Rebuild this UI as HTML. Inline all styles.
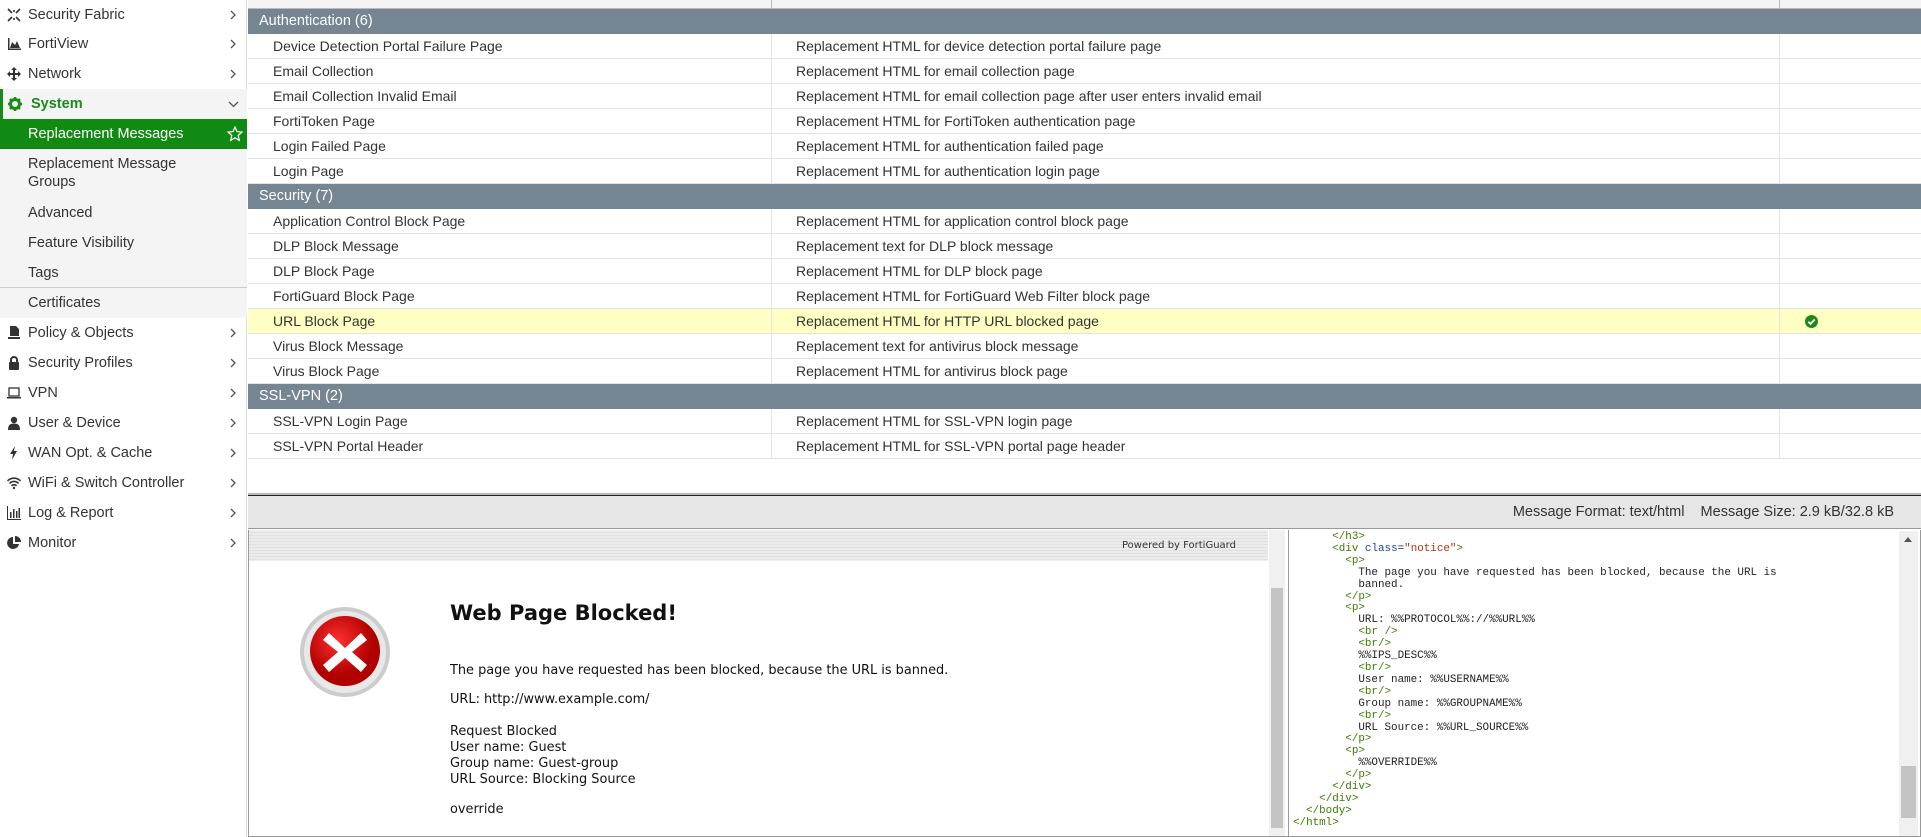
<!DOCTYPE html>
<html><head><meta charset="utf-8">
<style>
*{margin:0;padding:0;box-sizing:border-box}
body{width:1921px;height:837px;overflow:hidden;background:#fff;font-family:"Liberation Sans",sans-serif;color:#333;position:relative}
.sb{position:absolute;left:0;top:0;width:247px;height:837px;background:#fff;border-right:1px solid #ddd}
.it{position:absolute;left:0;width:247px;height:30px;line-height:30px;font-size:14.5px;color:#333;padding-left:28px}
.it .ic{position:absolute;left:7px;top:8px;width:14px;height:14px}
.it .ch{position:absolute;left:230px;top:10px;width:6px;height:10px}
.sub{background:#f4f4f4}
.tbl{position:absolute;left:248px;top:0;width:1673px}
.row{position:absolute;left:0;width:1673px;height:25px;border-bottom:1px solid #e3e3e3;font-size:14px;line-height:24px}
.row .n{position:absolute;left:25px}
.row .d{position:absolute;left:548px}
.row:before{content:"";position:absolute;left:523px;top:0;height:25px;border-left:1px solid #e3e3e3}
.row:after{content:"";position:absolute;left:1531px;top:0;height:25px;border-left:1px solid #e3e3e3}
.grp{position:absolute;left:0;width:1673px;height:25px;background:#768592;color:#fff;font-size:14.5px;line-height:25px;padding-left:11px}
.code{position:absolute;left:1293px;top:532px;font-family:"Liberation Mono",monospace;font-size:10.9px;line-height:11.9px;color:#222;white-space:pre}
.t{color:#3d7a00}.a{color:#1a3fb0}.v{color:#b03010}
.pv{position:absolute;font-family:"DejaVu Sans",sans-serif;font-size:12.9px;color:#111;left:450px}
</style></head><body>
<svg width="0" height="0" style="position:absolute"><defs><path id="chv" d="M1 1l4 4-4 4" fill="none" stroke="#555" stroke-width="1.3"/></defs></svg>
<div class="sb">
 <div class="it" style="top:0"><svg class="ic" viewBox="0 0 14 14"><g stroke="#333" stroke-width="1.6"><path d="M1 1l4 4M13 1l-4 4M1 13l4-4M13 13l-4-4M7 2v2M7 10v2"/></g></svg>Security Fabric<svg class="ch"><use href="#chv"/></svg></div>
 <div class="it" style="top:29px"><svg class="ic" viewBox="0 0 14 14"><path d="M1 1v12h13v-1.5H2.5V1z M3 11l2-6 3 3 2-4 3 7z" fill="#333"/></svg>FortiView<svg class="ch"><use href="#chv"/></svg></div>
 <div class="it" style="top:59px"><svg class="ic" viewBox="0 0 14 14"><path d="M7 0l3 3H8v3h3V4l3 3-3 3V8H8v3h2l-3 3-3-3h2V8H3v2L0 7l3-3v2h3V3H4z" fill="#333"/></svg>Network<svg class="ch"><use href="#chv"/></svg></div>
 <div class="it sub" style="top:89px;color:#1a8a1a;font-weight:bold;border-left:3px solid #1a8a1a"><svg class="ic" style="left:5px" viewBox="0 0 14 14"><circle cx="7" cy="7" r="4.5" fill="none" stroke="#1a8a1a" stroke-width="3"/><g stroke="#1a8a1a" stroke-width="2.4"><path d="M7 0v3M7 11v3M0 7h3M11 7h3M2 2l2 2M10 10l2 2M12 2l-2 2M2 12l2-2"/></g></svg>System<svg style="position:absolute;left:225px;top:12px" width="11" height="7"><path d="M1 1l4.5 4.5L10 1" fill="none" stroke="#555" stroke-width="1.3"/></svg></div>
 <div class="it" style="top:119px;background:#118a14;color:#fff">Replacement Messages<svg style="position:absolute;left:227px;top:7px" width="16" height="16" viewBox="0 0 16 16"><path d="M8 1l2 4.6 5 .5-3.8 3.3 1.1 5L8 11.8 3.7 14.4l1.1-5L1 6.1l5-.5z" fill="none" stroke="#fff" stroke-width="1.2"/></svg></div>
 <div class="sub" style="position:absolute;top:149px;left:0;width:247px;height:138px"></div>
 <div class="it" style="top:155px;line-height:18px;height:40px">Replacement Message<br>Groups</div>
 <div class="it" style="top:198px">Advanced</div>
 <div class="it" style="top:228px">Feature Visibility</div>
 <div class="it" style="top:258px">Tags</div>
 <div class="it sub" style="top:287px;height:31px;border-top:1px solid #ccc">Certificates</div>
 <div class="it" style="top:318px"><svg class="ic" viewBox="0 0 14 14"><path d="M3 0h6l3 3v7H3z M1 11h12v2H1z" fill="#333"/></svg>Policy &amp; Objects<svg class="ch"><use href="#chv"/></svg></div>
 <div class="it" style="top:348px"><svg class="ic" viewBox="0 0 14 14"><path d="M4 6V4a3 3 0 016 0v2" fill="none" stroke="#333" stroke-width="2"/><rect x="2" y="6" width="10" height="8" rx="1" fill="#333"/></svg>Security Profiles<svg class="ch"><use href="#chv"/></svg></div>
 <div class="it" style="top:378px"><svg class="ic" viewBox="0 0 14 14"><rect x="2" y="2" width="10" height="8" fill="none" stroke="#333" stroke-width="1.3"/><path d="M0 11h14v1.5H0z" fill="#333"/></svg>VPN<svg class="ch"><use href="#chv"/></svg></div>
 <div class="it" style="top:408px"><svg class="ic" viewBox="0 0 14 14"><circle cx="7" cy="4" r="3.2" fill="#333"/><path d="M1 14c0-5 2-6.5 6-6.5s6 1.5 6 6.5z" fill="#333"/></svg>User &amp; Device<svg class="ch"><use href="#chv"/></svg></div>
 <div class="it" style="top:438px"><svg class="ic" viewBox="0 0 14 14"><path d="M8 0L3 8h3l-1 6 5-9H7z" fill="#333"/></svg>WAN Opt. &amp; Cache<svg class="ch"><use href="#chv"/></svg></div>
 <div class="it" style="top:468px"><svg class="ic" viewBox="0 0 14 14"><g fill="none" stroke="#333" stroke-width="1.6"><path d="M0.5 5a9 9 0 0113 0M2.5 7.5a6 6 0 019 0M4.5 10a3 3 0 015 0"/></g><circle cx="7" cy="12" r="1.2" fill="#333"/></svg>WiFi &amp; Switch Controller<svg class="ch"><use href="#chv"/></svg></div>
 <div class="it" style="top:498px"><svg class="ic" viewBox="0 0 14 14"><path d="M1 0v13h13v1H0V0z M3 6h1.5v6H3zM6 3h1.5v9H6zM9 5h1.5v7H9zM11.5 2H13v10h-1.5z" fill="#333"/></svg>Log &amp; Report<svg class="ch"><use href="#chv"/></svg></div>
 <div class="it" style="top:528px"><svg class="ic" viewBox="0 0 14 14"><path d="M6 1a6 6 0 106 7H6z" fill="#333"/><path d="M8 0v6h6a6 6 0 00-6-6z" fill="#333"/></svg>Monitor<svg class="ch"><use href="#chv"/></svg></div>
</div>

<div class="tbl">
 <div style="position:absolute;top:0;left:0;width:1673px;height:9px;background:#f4f4f4;border-bottom:1px solid #bbb"><div style="position:absolute;left:523px;top:0;height:9px;border-left:1px solid #bbb"></div><div style="position:absolute;left:1531px;top:0;height:9px;border-left:1px solid #bbb"></div></div>
 <div class="grp" style="top:9px">Authentication (6)</div>
 <div class="row" style="top:34px"><span class="n">Device Detection Portal Failure Page</span><span class="d">Replacement HTML for device detection portal failure page</span></div>
 <div class="row" style="top:59px"><span class="n">Email Collection</span><span class="d">Replacement HTML for email collection page</span></div>
 <div class="row" style="top:84px"><span class="n">Email Collection Invalid Email</span><span class="d">Replacement HTML for email collection page after user enters invalid email</span></div>
 <div class="row" style="top:109px"><span class="n">FortiToken Page</span><span class="d">Replacement HTML for FortiToken authentication page</span></div>
 <div class="row" style="top:134px"><span class="n">Login Failed Page</span><span class="d">Replacement HTML for authentication failed page</span></div>
 <div class="row" style="top:159px"><span class="n">Login Page</span><span class="d">Replacement HTML for authentication login page</span></div>
 <div class="grp" style="top:184px">Security (7)</div>
 <div class="row" style="top:209px"><span class="n">Application Control Block Page</span><span class="d">Replacement HTML for application control block page</span></div>
 <div class="row" style="top:234px"><span class="n">DLP Block Message</span><span class="d">Replacement text for DLP block message</span></div>
 <div class="row" style="top:259px"><span class="n">DLP Block Page</span><span class="d">Replacement HTML for DLP block page</span></div>
 <div class="row" style="top:284px"><span class="n">FortiGuard Block Page</span><span class="d">Replacement HTML for FortiGuard Web Filter block page</span></div>
 <div class="row" style="top:309px;background:#ffffc4"><span class="n">URL Block Page</span><span class="d">Replacement HTML for HTTP URL blocked page</span><svg style="position:absolute;left:1557px;top:6px" width="13" height="13" viewBox="0 0 13 13"><circle cx="6.5" cy="6.5" r="6.5" fill="#1a8a1a"/><path d="M3.3 6.7l2.2 2.2 4.2-4.4" fill="none" stroke="#fff" stroke-width="1.8"/></svg></div>
 <div class="row" style="top:334px"><span class="n">Virus Block Message</span><span class="d">Replacement text for antivirus block message</span></div>
 <div class="row" style="top:359px"><span class="n">Virus Block Page</span><span class="d">Replacement HTML for antivirus block page</span></div>
 <div class="grp" style="top:384px">SSL-VPN (2)</div>
 <div class="row" style="top:409px"><span class="n">SSL-VPN Login Page</span><span class="d">Replacement HTML for SSL-VPN login page</span></div>
 <div class="row" style="top:434px"><span class="n">SSL-VPN Portal Header</span><span class="d">Replacement HTML for SSL-VPN portal page header</span></div>
</div>

<div style="position:absolute;left:248px;top:493px;width:1673px;height:3px;background:#bbb;border-bottom:1px solid #222"></div>
<div style="position:absolute;left:248px;top:496px;width:1673px;height:33px;background:#e6e6e6;border-bottom:1px solid #999;font-size:14.5px;line-height:33px;color:#333"><span style="position:absolute;right:27px">Message Format: text/html &nbsp;&nbsp; Message Size: 2.9 kB/32.8 kB</span></div>

<div style="position:absolute;left:248px;top:530px;width:1040px;height:307px;border-left:1px solid #999;border-bottom:1px solid #999"></div>
<div style="position:absolute;left:249px;top:530px;width:1019px;height:31px;background:repeating-linear-gradient(#ececec 0 2px,#e0e0e0 2px 3px);font-size:10.5px;color:#333"><span style="position:absolute;left:873px;top:10px;font-family:'DejaVu Sans',sans-serif;font-size:10px">Powered by FortiGuard</span></div>
<div style="position:absolute;left:1269px;top:530px;width:16px;height:306px;background:#f0f0f0"><div style="position:absolute;left:2px;top:58px;width:12px;height:240px;background:#c4c4c4"></div></div>

<svg style="position:absolute;left:299px;top:606px" width="92" height="92" viewBox="0 0 92 92"><defs><radialGradient id="g1" cx="40%" cy="35%"><stop offset="0" stop-color="#ff3030"/><stop offset="1" stop-color="#b00000"/></radialGradient></defs><circle cx="46" cy="46" r="45" fill="#ccc"/><circle cx="46" cy="46" r="41" fill="#e8e8e8"/><circle cx="46" cy="45" r="35" fill="url(#g1)"/><path d="M30 27l16 15 16-15 6 7-15 12 15 13-6 7-16-14-16 14-6-7 15-13-15-12z" fill="#fff"/></svg>
<div class="pv" style="top:601px;font-size:21px;font-weight:bold">Web Page Blocked!</div>
<div class="pv" style="top:663px">The page you have requested has been blocked, because the URL is banned.</div>
<div class="pv" style="top:692px">URL: http://www.example.com/</div>
<div class="pv" style="top:724px;line-height:16px">Request Blocked<br>User name: Guest<br>Group name: Guest-group<br>URL Source: Blocking Source</div>
<div class="pv" style="top:802px">override</div>

<div style="position:absolute;left:1288px;top:530px;width:633px;height:307px;border-left:1px solid #999;border-bottom:1px solid #999;border-right:1px solid #999"></div>
<div style="position:absolute;left:1899px;top:531px;width:19px;height:305px;background:#f0f0f0"><div style="position:absolute;left:2px;top:235px;width:15px;height:52px;background:#c4c4c4"></div><div style="position:absolute;left:5px;top:6px;border:4px solid transparent;border-bottom:5px solid #555;border-top:0"></div></div>
<div class="code">      <span class="t">&lt;/h3&gt;</span>
      <span class="t">&lt;div</span> <span class="a">class</span>=<span class="v">"notice"</span><span class="t">&gt;</span>
        <span class="t">&lt;p&gt;</span>
          The page you have requested has been blocked, because the URL is
          banned.
        <span class="t">&lt;/p&gt;</span>
        <span class="t">&lt;p&gt;</span>
          URL: %%PROTOCOL%%://%%URL%%
          <span class="t">&lt;br /&gt;</span>
          <span class="t">&lt;br/&gt;</span>
          %%IPS_DESC%%
          <span class="t">&lt;br/&gt;</span>
          User name: %%USERNAME%%
          <span class="t">&lt;br/&gt;</span>
          Group name: %%GROUPNAME%%
          <span class="t">&lt;br/&gt;</span>
          URL Source: %%URL_SOURCE%%
        <span class="t">&lt;/p&gt;</span>
        <span class="t">&lt;p&gt;</span>
          %%OVERRIDE%%
        <span class="t">&lt;/p&gt;</span>
      <span class="t">&lt;/div&gt;</span>
    <span class="t">&lt;/div&gt;</span>
  <span class="t">&lt;/body&gt;</span>
<span class="t">&lt;/html&gt;</span></div>
</body></html>
